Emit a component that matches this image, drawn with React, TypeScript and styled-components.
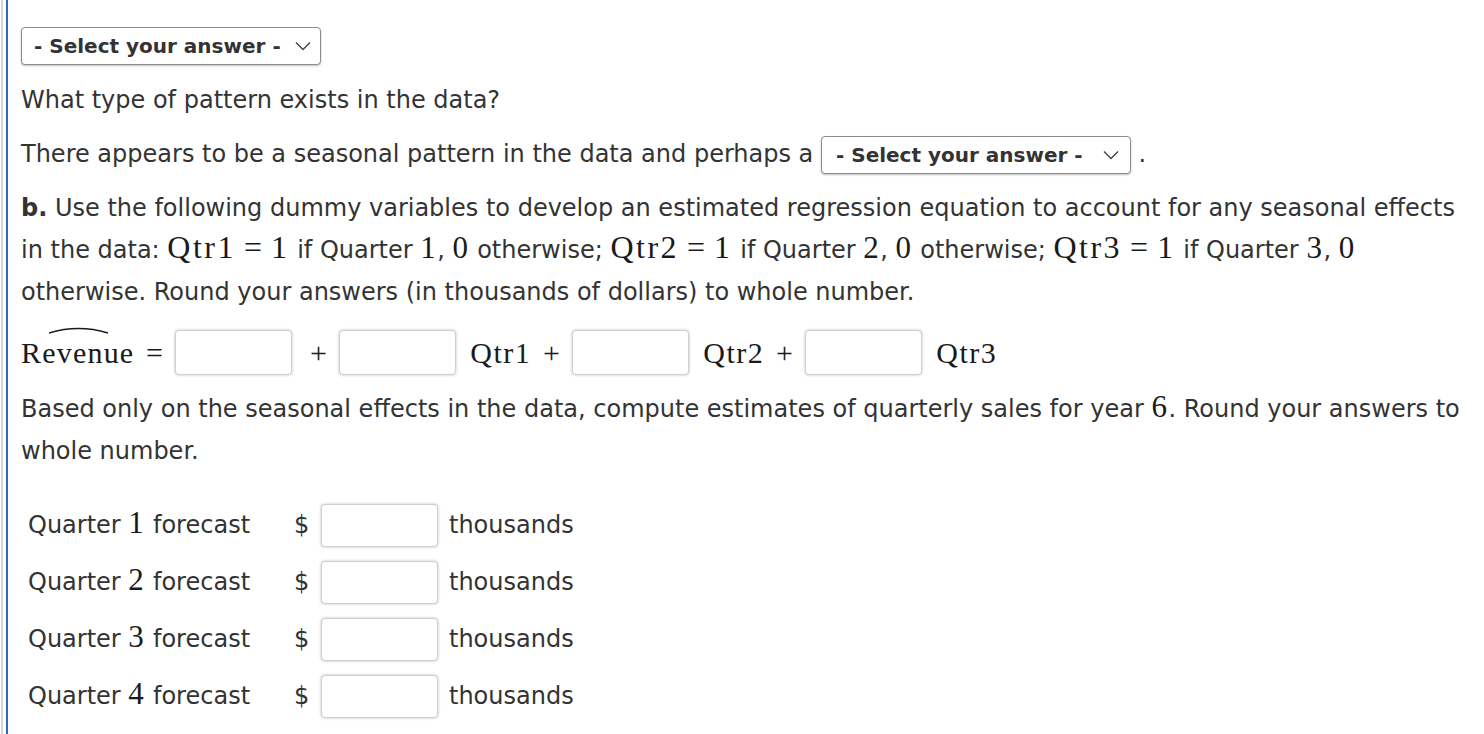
import React from "react";
import styled, { createGlobalStyle } from "styled-components";

const GlobalStyle = createGlobalStyle`
  html, body {
    margin: 0;
    padding: 0;
    background: #fff;
  }
  body {
    font-family: "DejaVu Sans", Verdana, sans-serif;
    color: #333;
  }
`;

const SOuter = styled.div`
  margin-left: 1px;
  border-left: 2px solid #d4d4d4;
  min-height: 734px;
  box-sizing: border-box;
`;

const SRail = styled.div`
  margin-left: 3px;
  border-left: 2px solid #2f66c9;
  min-height: 734px;
  padding: 27px 0 0 13px;
  box-sizing: border-box;
`;

const SContent = styled.div`
  width: 1452px;
  font-size: 24px;
  line-height: 42px;
`;

const SSelectRow = styled.div`
  display: flex;
  height: 38px;
`;

const SSelect = styled.span<{ $width: number }>`
  display: inline-flex;
  align-items: center;
  justify-content: space-between;
  box-sizing: border-box;
  width: ${(p) => p.$width}px;
  height: 38px;
  padding: 0 ${(p) => (p.$width > 305 ? 11 : 9)}px 0 ${(p) => (p.$width > 305 ? 14 : 12)}px;
  border: 1px solid #8c8c8c;
  border-radius: 4px;
  box-shadow: 0 1px 2px rgba(0, 0, 0, 0.25);
  background: #fff;
  font-weight: bold;
  font-size: 20px;
  line-height: 1;
  color: #333;
  vertical-align: middle;
`;

const SPara = styled.p<{ $top?: number }>`
  margin: ${(p) => p.$top ?? 12}px 0 0;
  line-height: 42px;
`;

const SMath = styled.span`
  font-family: "Liberation Serif", "DejaVu Serif", serif;
  font-size: 31px;
  line-height: 1;
  letter-spacing: 1.5px;
  color: #1a1a1a;
`;

const SDummy = styled(SMath)`
  font-size: 32px;
  letter-spacing: 2.5px;
`;

const SMathOp = styled.span`
  margin: 0 9px 0 8px;
  letter-spacing: 0;
`;

const SEquation = styled.div`
  display: flex;
  align-items: center;
  height: 45px;
  margin-top: 17px;
  font-family: "Liberation Serif", "DejaVu Serif", serif;
  font-size: 30px;
  color: #1a1a1a;
`;

const SHatWord = styled.span`
  position: relative;
  display: inline-block;
  letter-spacing: 1.2px;
`;

const SHat = styled.svg`
  position: absolute;
  left: 25%;
  top: -7px;
  width: 52%;
  height: 9px;
`;

const SOp = styled.span`
  display: inline-block;
  width: 22px;
  margin: 0 9px;
  text-align: center;
`;

const STerm = styled.span`
  margin-left: 8px;
  letter-spacing: 1.5px;
`;

const SAnswer = styled.span`
  display: inline-block;
  box-sizing: border-box;
  width: 117px;
  height: 45px;
  margin: 0 6px 0 1px;
  border: 1px solid #cfcfcf;
  border-radius: 4px;
  box-shadow: 0 0 3px rgba(0, 0, 0, 0.25);
  background: #fff;
`;

const SGrid = styled.div`
  display: grid;
  grid-template-columns: 266px 27px 128px auto;
  row-gap: 14px;
  margin-top: 32px;
  padding-left: 7px;
  align-items: center;
`;

const SCell = styled.div`
  line-height: 43px;
  height: 43px;
`;

const SSmallAnswer = styled(SAnswer)`
  display: block;
  height: 43px;
  margin: 0;
`;

const Chevron = () => (
  <svg width="16" height="10" viewBox="0 0 16 10">
    <polyline points="1,1.5 8,8.5 15,1.5" fill="none" stroke="#444" strokeWidth="1.4" />
  </svg>
);

const Select: React.FC<{ width: number }> = ({ width }) => (
  <SSelect $width={width}>
    <span>- Select your answer -</span>
    <Chevron />
  </SSelect>
);

const Dummy: React.FC<{ n: number }> = ({ n }) => (
  <SDummy>
    Qtr{n}
    <SMathOp>=</SMathOp>1
  </SDummy>
);

const quarters = [1, 2, 3, 4];

export default function App() {
  return (
    <>
      <GlobalStyle />
      <SOuter>
        <SRail>
          <SContent>
            <SSelectRow>
              <Select width={300} />
            </SSelectRow>
            <SPara $top={14}>What type of pattern exists in the data?</SPara>
            <SPara>
              There appears to be a seasonal pattern in the data and perhaps a{" "}
              <Select width={310} /> .
            </SPara>
            <SPara>
              <b>b.</b> Use the following dummy variables to develop an estimated regression equation to
              account for any seasonal effects in the data: <Dummy n={1} /> if Quarter <SMath>1</SMath>,{" "}
              <SMath>0</SMath> otherwise; <Dummy n={2} /> if Quarter <SMath>2</SMath>, <SMath>0</SMath>{" "}
              otherwise; <Dummy n={3} /> if Quarter <SMath>3</SMath>, <SMath>0</SMath> otherwise. Round
              your answers (in thousands of dollars) to whole number.
            </SPara>
            <SEquation>
              <SHatWord>
                Revenue
                <SHat viewBox="0 0 60 9" preserveAspectRatio="none">
                  <path d="M0,8 Q30,-1 60,8" fill="none" stroke="#1a1a1a" strokeWidth="1.6" />
                </SHat>
              </SHatWord>
              <SOp>=</SOp>
              <SAnswer />
              <SOp>+</SOp>
              <SAnswer />
              <STerm>Qtr1</STerm>
              <SOp>+</SOp>
              <SAnswer />
              <STerm>Qtr2</STerm>
              <SOp>+</SOp>
              <SAnswer />
              <STerm>Qtr3</STerm>
            </SEquation>
            <SPara $top={13}>
              Based only on the seasonal effects in the data, compute estimates of quarterly sales for year{" "}
              <SMath>6</SMath>. Round your answers to whole number.
            </SPara>
            <SGrid>
              {quarters.map((q) => (
                <React.Fragment key={q}>
                  <SCell>
                    Quarter <SMath>{q}</SMath> forecast
                  </SCell>
                  <SCell>$</SCell>
                  <SCell>
                    <SSmallAnswer />
                  </SCell>
                  <SCell>thousands</SCell>
                </React.Fragment>
              ))}
            </SGrid>
          </SContent>
        </SRail>
      </SOuter>
    </>
  );
}
